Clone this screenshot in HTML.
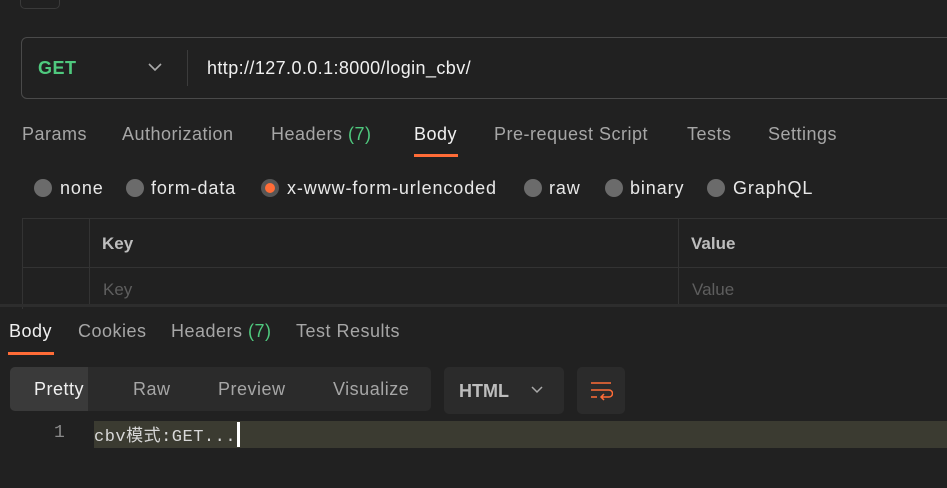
<!DOCTYPE html><html><head><meta charset="utf-8"><style>
body{margin:0;width:947px;height:488px;background:#212121;font-family:"Liberation Sans","Noto Sans CJK SC",sans-serif;color:#a6a6a6;position:relative;overflow:hidden}
.a{position:absolute;white-space:nowrap}
.t{font-size:18px;color:#a6a6a6;letter-spacing:0.5px}
.q{letter-spacing:0.9px}
.r{width:18px;height:18px;border-radius:50%;background:#6b6b6b;position:absolute}
</style></head><body>
<div class="a" style="left:20px;top:-10px;width:38px;height:17px;border:1px solid #3a3a3a;border-radius:5px"></div>
<div class="a" style="left:21px;top:37px;width:940px;height:60px;border:1px solid #4a4a4a;border-radius:6px"></div>
<div class="a" style="left:38px;top:58px;font-size:18px;font-weight:bold;color:#4fc97e;letter-spacing:0.5px">GET</div>
<svg class="a" style="left:147px;top:61px" width="16" height="12"><path d="M2 3l6 6 6-6" stroke="#aaa" stroke-width="1.6" fill="none"/></svg>
<div class="a" style="left:187px;top:50px;width:1px;height:36px;background:#3c3c3c"></div>
<div class="a" style="left:207px;top:58px;font-size:18px;color:#f0f0f0;letter-spacing:0.4px">http://127.0.0.1:8000/login_cbv/</div>
<div class="a t" style="left:22px;top:124px">Params</div>
<div class="a t" style="left:122px;top:124px">Authorization</div>
<div class="a t" style="left:271px;top:124px">Headers <span style="color:#4fc97e">(7)</span></div>
<div class="a t" style="left:414px;top:124px;color:#f0f0f0">Body</div>
<div class="a" style="left:414px;top:154px;width:44px;height:3px;background:#ff6c37"></div>
<div class="a t" style="left:494px;top:124px">Pre-request Script</div>
<div class="a t" style="left:687px;top:124px">Tests</div>
<div class="a t" style="left:768px;top:124px">Settings</div>
<div class="r" style="left:34px;top:179px"></div><div class="a t q" style="left:60px;top:178px;color:#e8e8e8">none</div>
<div class="r" style="left:126px;top:179px"></div><div class="a t q" style="left:151px;top:178px;color:#e8e8e8">form-data</div>
<div class="r" style="left:261px;top:179px;background:#555"><div style="position:absolute;left:4px;top:4px;width:10px;height:10px;border-radius:50%;background:#ff6c37"></div></div><div class="a t q" style="left:287px;top:178px;color:#e8e8e8">x-www-form-urlencoded</div>
<div class="r" style="left:524px;top:179px"></div><div class="a t q" style="left:549px;top:178px;color:#e8e8e8">raw</div>
<div class="r" style="left:605px;top:179px"></div><div class="a t q" style="left:630px;top:178px;color:#e8e8e8">binary</div>
<div class="r" style="left:707px;top:179px"></div><div class="a t q" style="left:733px;top:178px;color:#e8e8e8">GraphQL</div>
<div class="a" style="left:22px;top:218px;width:930px;height:90px;border:1px solid #333;border-bottom:none"></div>
<div class="a" style="left:22px;top:267px;width:930px;height:1px;background:#333"></div>
<div class="a" style="left:89px;top:218px;width:1px;height:88px;background:#333"></div>
<div class="a" style="left:678px;top:218px;width:1px;height:88px;background:#333"></div>
<div class="a" style="left:102px;top:234px;font-size:17px;font-weight:bold;color:#bdbdbd">Key</div>
<div class="a" style="left:691px;top:234px;font-size:17px;font-weight:bold;color:#bdbdbd">Value</div>
<div class="a" style="left:103px;top:280px;font-size:17px;color:#5e5e5e">Key</div>
<div class="a" style="left:692px;top:280px;font-size:17px;color:#5e5e5e">Value</div>
<div class="a" style="left:0;top:304px;width:947px;height:3px;background:#2d2d2d"></div>
<div class="a t" style="left:9px;top:321px;color:#f0f0f0">Body</div>
<div class="a" style="left:8px;top:352px;width:46px;height:3px;background:#ff6c37"></div>
<div class="a t" style="left:78px;top:321px">Cookies</div>
<div class="a t" style="left:171px;top:321px">Headers <span style="color:#4fc97e">(7)</span></div>
<div class="a t" style="left:296px;top:321px">Test Results</div>
<div class="a" style="left:10px;top:367px;width:421px;height:44px;background:#2b2b2b;border-radius:5px"></div>
<div class="a" style="left:10px;top:367px;width:78px;height:44px;background:#3a3a3a;border-radius:5px 0 0 5px"></div>
<div class="a t" style="left:34px;top:379px;color:#f0f0f0">Pretty</div>
<div class="a t" style="left:133px;top:379px">Raw</div>
<div class="a t" style="left:218px;top:379px">Preview</div>
<div class="a t" style="left:333px;top:379px">Visualize</div>
<div class="a" style="left:444px;top:367px;width:120px;height:47px;background:#2b2b2b;border-radius:5px"></div>
<div class="a" style="left:459px;top:381px;font-size:18px;font-weight:bold;color:#bdbdbd">HTML</div>
<svg class="a" style="left:530px;top:385px" width="14" height="10"><path d="M2 2l5 5 5-5" stroke="#aaa" stroke-width="1.5" fill="none"/></svg>
<div class="a" style="left:577px;top:367px;width:48px;height:47px;background:#2b2b2b;border-radius:5px"></div>
<svg class="a" style="left:589px;top:380px" width="24" height="22"><path d="M2 3h20M2 10h18a3.5 3.5 0 010 7h-7M15 14l-3 3 3 3M2 17h6" stroke="#ff6c37" stroke-width="1.5" fill="none"/></svg>
<div class="a" style="left:94px;top:421px;width:853px;height:27px;background:#3b3b31"></div>
<div class="a" style="left:54px;top:423px;font-family:'Liberation Mono',monospace;font-size:18px;color:#8a8a8a">1</div>
<div class="a" style="left:94px;top:421px;font-family:'Liberation Mono','Noto Sans CJK SC',monospace;font-size:17px;letter-spacing:0.5px;color:#d8d8d8">cbv模式:GET...</div>
<div class="a" style="left:237px;top:422px;width:3px;height:25px;background:#fff"></div>
</body></html>
